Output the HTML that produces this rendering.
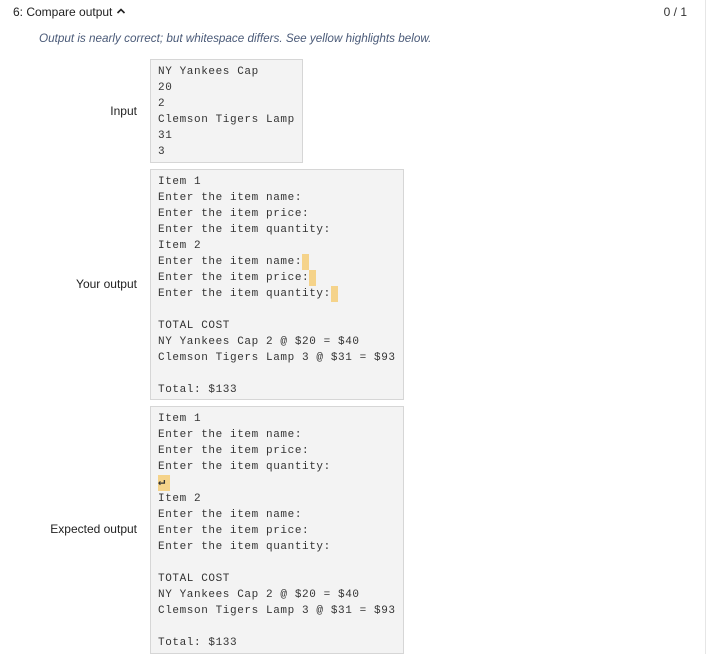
<!DOCTYPE html>
<html><head><style>
body{margin:0;background:#fff;width:707px;height:654px;overflow:hidden;font-family:"Liberation Sans",sans-serif;position:relative}
.edge{position:absolute;right:1px;top:0;bottom:0;width:1px;background:#e6e6e6}
.h{position:absolute;left:13px;top:5px;font-size:12px;color:#222}
.sc{position:absolute;right:20px;top:5px;font-size:12px;color:#333}
.msg{position:absolute;left:39px;top:32px;font-size:11.7px;font-style:italic;color:#4a5a78}
.lab{position:absolute;right:570px;font-size:12px;color:#222;text-align:right;white-space:nowrap}
pre{position:absolute;left:150px;margin:0;box-sizing:border-box;background:#f3f3f3;border:1px solid #d6d6d6;padding:4px 7px 2px;font-family:"Liberation Mono",monospace;font-size:11px;letter-spacing:0.6px;line-height:16px;color:#333}
.y{background:#f5d38a;display:inline-block;width:7px;height:16px;vertical-align:top}
</style></head><body>
<div class="edge"></div>
<div class="h">6: Compare output <svg width="10" height="8" viewBox="0 0 10 8" style="vertical-align:1px"><path d="M1.5 6 L5 2.5 L8.5 6" fill="none" stroke="#222" stroke-width="1.6"/></svg></div>
<div class="sc">0 / 1</div>
<div class="msg">Output is nearly correct; but whitespace differs. See yellow highlights below.</div>
<div class="lab" style="top:104px">Input</div>
<pre style="top:59px;width:153px;height:104px">NY Yankees Cap
20
2
Clemson Tigers Lamp
31
3</pre>
<div class="lab" style="top:277px">Your output</div>
<pre style="top:169px;width:254px;height:231px">Item 1
Enter the item name:
Enter the item price:
Enter the item quantity:
Item 2
Enter the item name:<span class="y"></span>
Enter the item price:<span class="y"></span>
Enter the item quantity:<span class="y"></span>

TOTAL COST
NY Yankees Cap 2 @ $20 = $40
Clemson Tigers Lamp 3 @ $31 = $93

Total: $133</pre>
<div class="lab" style="top:522px">Expected output</div>
<pre style="top:406px;width:254px;height:248px">Item 1
Enter the item name:
Enter the item price:
Enter the item quantity:
<span class="y" style="width:12px;font-size:12px;line-height:15px;font-weight:bold">&#8629;</span>
Item 2
Enter the item name:
Enter the item price:
Enter the item quantity:

TOTAL COST
NY Yankees Cap 2 @ $20 = $40
Clemson Tigers Lamp 3 @ $31 = $93

Total: $133</pre>
</body></html>
